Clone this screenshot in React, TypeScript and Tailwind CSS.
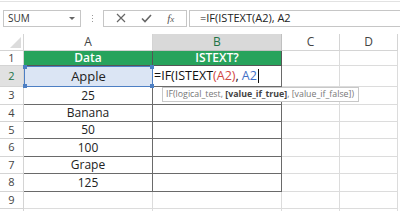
import React from "react";

const F = { fontFamily: '"Open Sans", "Noto Sans", sans-serif' };

const rowH = [15, 21, 18, 17, 17, 18, 17, 18, 17];
const aVals = ["Data", "Apple", "25", "Banana", "50", "100", "Grape", "125", ""];

function RowHeader({ n, h, sel }: { n: number; h: number; sel?: boolean }) {
  return (
    <div
      className={`flex items-center justify-center border-b border-r border-[#d4d4d4] text-[11px] ${sel ? "bg-[#e1e1e1] text-[#217346]" : "bg-white text-[#444]"}`}
      style={{ height: h }}
    >
      {n}
    </div>
  );
}

export default function App() {
  return (
    <div className="w-[400px] h-[211px] overflow-hidden bg-white relative" style={F}>
      {/* toolbar */}
      <div className="h-[33px] bg-white border-t border-[#e2e2e2] mt-[1px] flex items-center">
        <div className="ml-[3px] w-[78px] h-[17px] border border-[#c6c6c6] flex items-center justify-between pl-[4px] pr-[5px] text-[10px] text-[#333]">
          <span>SUM</span>
          <span className="w-0 h-0 border-l-[3px] border-r-[3px] border-t-[3px] border-l-transparent border-r-transparent border-t-[#666]" />
        </div>
        <div className="w-[22px] flex flex-col items-center gap-[2px]">
          <span className="w-[1px] h-[1px] bg-[#999]" />
          <span className="w-[1px] h-[1px] bg-[#999]" />
          <span className="w-[1px] h-[1px] bg-[#999]" />
        </div>
        <div className="w-[84px] h-[17px] border border-[#c6c6c6] flex items-center justify-around px-[4px] text-[#666]">
          <svg width="10" height="10" viewBox="0 0 10 10">
            <path d="M1 1 L9 9 M9 1 L1 9" stroke="#666" strokeWidth="1.2" />
          </svg>
          <svg width="11" height="9" viewBox="0 0 11 9">
            <path d="M1 4.5 L4 7.5 L10 1" stroke="#666" strokeWidth="1.6" fill="none" />
          </svg>
          <span className="italic text-[11px] text-[#555]" style={{ fontFamily: '"Liberation Serif", serif' }}>
            f<span className="text-[9px]">x</span>
          </span>
        </div>
        <div className="ml-[2px] flex-1 h-[17px] border-t border-b border-l border-[#c6c6c6] flex items-center pl-[10px] text-[11px] text-[#222]">
          =IF(ISTEXT(A2), A2
        </div>
      </div>

      {/* grid */}
      <div className="flex">
        {/* row headers */}
        <div className="w-[24px] flex flex-col">
          <div className="h-[17px] border-b border-r border-[#d4d4d4] relative bg-white">
            <svg className="absolute right-[2px] bottom-[2px]" width="11" height="11" viewBox="0 0 11 11">
              <path d="M11 0 L11 11 L0 11 Z" fill="#dcdcdc" />
            </svg>
          </div>
          {rowH.map((h, i) => (
            <RowHeader key={i} n={i + 1} h={h} sel={i === 1} />
          ))}
          <div className="h-[10px] border-r border-[#d4d4d4]" />
        </div>

        {/* column A */}
        <div className="w-[129px] flex flex-col">
          <div className="h-[17px] border-b border-r border-[#d4d4d4] flex items-center justify-center text-[12px] text-[#444]">A</div>
          {rowH.map((h, i) => {
            if (i === 0)
              return (
                <div key={i} className="bg-[#27a35c] text-white font-semibold text-[12px] flex items-center justify-center border-b border-r border-[#555]" style={{ height: h }}>
                  Data
                </div>
              );
            if (i === 1)
              return (
                <div key={i} className="bg-[#dbe5f4] text-[#222] text-[13px] font-medium flex items-center justify-center border border-[#4d7fc3] relative" style={{ height: h }}>
                  Apple
                  <span className="absolute -left-[2px] -top-[2px] w-[4px] h-[4px] bg-[#4d7fc3]" />
                  <span className="absolute -right-[2px] -top-[2px] w-[4px] h-[4px] bg-[#4d7fc3]" />
                  <span className="absolute -left-[2px] -bottom-[2px] w-[4px] h-[4px] bg-[#4d7fc3]" />
                  <span className="absolute -right-[2px] -bottom-[2px] w-[4px] h-[4px] bg-[#4d7fc3]" />
                </div>
              );
            const inTable = i < 8;
            return (
              <div
                key={i}
                className={`flex items-center justify-center text-[12px] font-medium text-[#222] border-b border-r ${inTable ? "border-[#6a6a6a]" : "border-[#dcdcdc]"}`}
                style={{ height: h }}
              >
                {aVals[i]}
              </div>
            );
          })}
          <div className="h-[10px] border-r border-[#dcdcdc]" />
        </div>

        {/* column B */}
        <div className="w-[129px] flex flex-col">
          <div className="h-[17px] border-b border-r border-[#c0c0c0] bg-[#d9d9d9] flex items-center justify-center text-[12px] text-[#217346]">B</div>
          {rowH.map((h, i) => {
            if (i === 0)
              return (
                <div key={i} className="bg-[#27a35c] text-white font-semibold text-[12px] flex items-center justify-center border-b border-r border-[#555]" style={{ height: h }}>
                  ISTEXT?
                </div>
              );
            if (i === 1)
              return (
                <div key={i} className="flex items-center pl-[1px] text-[12.5px] text-[#111] border-b border-r border-[#6a6a6a] whitespace-nowrap" style={{ height: h }}>
                  <span>=IF(ISTEXT</span>
                  <span className="text-[#d0473f]">(A2)</span>
                  <span>, </span>
                  <span className="text-[#3f6fc6] ml-[3px]">A2</span>
                  <span className="w-[1px] h-[14px] bg-[#111] ml-[1px]" />
                </div>
              );
            const inTable = i < 8;
            return (
              <div
                key={i}
                className={`border-b border-r ${inTable ? "border-[#6a6a6a]" : "border-[#dcdcdc]"}`}
                style={{ height: h }}
              />
            );
          })}
          <div className="h-[10px] border-r border-[#dcdcdc]" />
        </div>

        {/* columns C, D */}
        {["C", "D"].map((c) => (
          <div key={c} className="w-[58px] flex flex-col">
            <div className="h-[17px] border-b border-r border-[#d4d4d4] flex items-center justify-center text-[12px] text-[#444]">{c}</div>
            {rowH.map((h, i) => (
              <div key={i} className="border-b border-r border-[#dcdcdc]" style={{ height: h }} />
            ))}
            <div className="h-[10px] border-r border-[#dcdcdc]" />
          </div>
        ))}
      </div>

      {/* tooltip */}
      <div className="absolute left-[162px] top-[87px] w-[197px] h-[15px] bg-white border border-[#c8c8c8] flex items-center pl-[3px] text-[8.8px] text-[#777] whitespace-nowrap">
        IF(logical_test,&nbsp;<span className="font-bold text-[#444]">[value_if_true]</span>, [value_if_false])
      </div>
    </div>
  );
}
